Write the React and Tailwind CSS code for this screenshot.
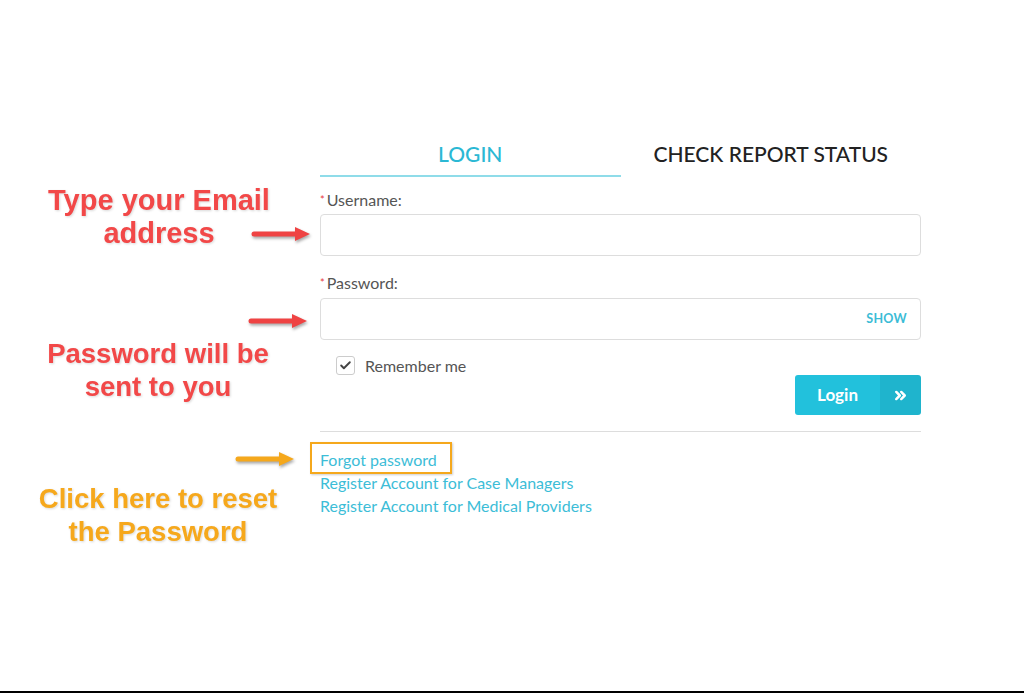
import { ChevronsRight, Check } from "lucide-react";

function Arrow({ color }) {
  return (
    <svg width="62" height="18" viewBox="0 0 62 18" className="drop-shadow-[1px_2px_1.5px_rgba(0,0,0,0.35)]">
      <path d="M3 9 H46" stroke={color} strokeWidth="5" strokeLinecap="round" />
      <path d="M44 2 L59 9 L44 16 Z" fill={color} />
    </svg>
  );
}

export default function App() {
  return (
    <div className="h-[693px] bg-white border-b-2 border-black font-['Lato','Open_Sans',sans-serif]">
      <div className="flex pt-[140px]">
        {/* annotations */}
        <div className="relative w-[320px] shrink-0 font-['Liberation_Sans',Arial,sans-serif] font-bold leading-[33px] text-center">
          <div className="w-[318px] mt-[44px] text-[29px] text-[#f24848] drop-shadow-[1px_1px_1px_rgba(0,0,0,0.15)]">
            Type your Email
            <br />
            address
          </div>
          <div className="w-[316px] mt-[87px] text-[27.5px] text-[#f24848] drop-shadow-[1px_1px_1px_rgba(0,0,0,0.15)]">
            Password will be
            <br />
            sent to you
          </div>
          <div className="w-[316px] mt-[79px] text-[27.5px] text-[#f6a81c] drop-shadow-[1px_1px_1px_rgba(0,0,0,0.15)]">
            Click here to reset
            <br />
            the Password
          </div>
          <div className="absolute left-[251px] top-[85px]">
            <Arrow color="#ef4343" />
          </div>
          <div className="absolute left-[248px] top-[172px]">
            <Arrow color="#ef4343" />
          </div>
          <div className="absolute left-[235px] top-[310px]">
            <Arrow color="#f5a81c" />
          </div>
        </div>

        {/* form */}
        <div className="w-[601px]">
          <div className="flex text-[21px] leading-[28px] font-medium">
            <div className="w-1/2 text-center pb-[7px] border-b-2 border-[#8fdce9] text-[#2bb8d4]">LOGIN</div>
            <div className="w-1/2 text-center pb-[7px] text-[#222]">CHECK REPORT STATUS</div>
          </div>

          <div className="mt-[13px] text-[16px] leading-[20px] text-[#555]">
            <span className="text-[#e8383d] text-[11px] align-top mr-[2px]">*</span>Username:
          </div>
          <div className="mt-1 h-[42px] border border-[#ddd] rounded-[4px]"></div>

          <div className="mt-[17px] text-[16px] leading-[20px] text-[#555]">
            <span className="text-[#e8383d] text-[11px] align-top mr-[2px]">*</span>Password:
          </div>
          <div className="mt-[5px] h-[42px] border border-[#ddd] rounded-[4px] flex items-center justify-end pr-[13px]">
            <span className="text-[12.5px] font-bold text-[#3bbcd6] tracking-[0.3px]">SHOW</span>
          </div>

          <div className="mt-[16px] pl-[16px] flex items-center gap-[10px] h-[19px]">
            <div className="w-[19px] h-[19px] border border-[#ccc] rounded-[3px] flex items-center justify-center">
              <Check size={13} strokeWidth={3.5} className="text-[#444]" />
            </div>
            <span className="text-[16px] leading-[19px] text-[#555]">Remember me</span>
          </div>

          <div className="flex justify-end">
            <button className="flex h-[40px] w-[126px] rounded-[3px] overflow-hidden text-white">
              <span className="w-[85px] bg-[#22c1dc] flex items-center justify-center text-[17px] font-bold">Login</span>
              <span className="w-[41px] bg-[#1fb4cd] flex items-center justify-center">
                <ChevronsRight size={17} strokeWidth={3.5} />
              </span>
            </button>
          </div>

          <div className="mt-[16px] border-t border-[#ddd]"></div>

          <div className="mt-[16px] text-[16px] leading-[23px] text-[#3cbdd7]">
            <div className="relative">
              <span>Forgot password</span>
              <div className="absolute left-[-10px] top-[-6px] w-[142px] h-[32px] border-2 border-[#f5a81c] shadow-[1px_1px_2px_rgba(0,0,0,0.2)]"></div>
            </div>
            <div>Register Account for Case Managers</div>
            <div>Register Account for Medical Providers</div>
          </div>
        </div>
      </div>
    </div>
  );
}
